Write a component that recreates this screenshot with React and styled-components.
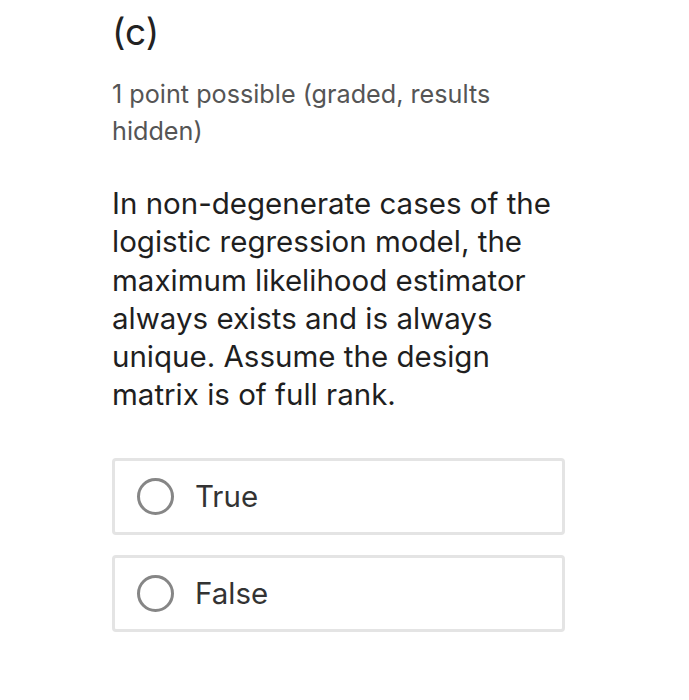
import React from "react";
import styled, { createGlobalStyle } from "styled-components";

const Global = createGlobalStyle`
  html, body { margin: 0; padding: 0; background: #fff; }
  body { font-family: Inter, "Noto Sans", sans-serif; }
`;

const Page = styled.div`
  padding: 8px 0 40px 112px;
  width: 453px;
`;

const Title = styled.h2`
  margin: 0;
  font-size: 37px;
  font-weight: 400;
  line-height: 48px;
  color: #222;
`;

const Meta = styled.p`
  margin: 20px 0 0;
  font-size: 25.2px;
  line-height: 37px;
  color: #555;
`;

const Prompt = styled.p`
  margin: 34px 0 0;
  font-size: 29.5px;
  line-height: 38.3px;
  color: #1f1f1f;
`;

const Options = styled.div`
  margin-top: 44px;
  display: flex;
  flex-direction: column;
  gap: 20px;
`;

const Option = styled.label`
  display: flex;
  align-items: center;
  gap: 21px;
  height: 77px;
  box-sizing: border-box;
  border: 3px solid #e4e4e4;
  border-radius: 4px;
  padding-left: 22px;
  font-size: 29.5px;
  color: #333;
`;

const Radio = styled.span`
  width: 37px;
  height: 37px;
  box-sizing: border-box;
  border: 3px solid #868686;
  border-radius: 50%;
  flex: none;
`;

export default function App() {
  return (
    <>
      <Global />
      <Page>
        <Title>(c)</Title>
        <Meta>1 point possible (graded, results hidden)</Meta>
        <Prompt>
          In non-degenerate cases of the logistic regression model, the maximum
          likelihood estimator always exists and is always unique. Assume the
          design matrix is of full rank.
        </Prompt>
        <Options>
          {["True", "False"].map((o) => (
            <Option key={o}>
              <Radio />
              {o}
            </Option>
          ))}
        </Options>
      </Page>
    </>
  );
}
